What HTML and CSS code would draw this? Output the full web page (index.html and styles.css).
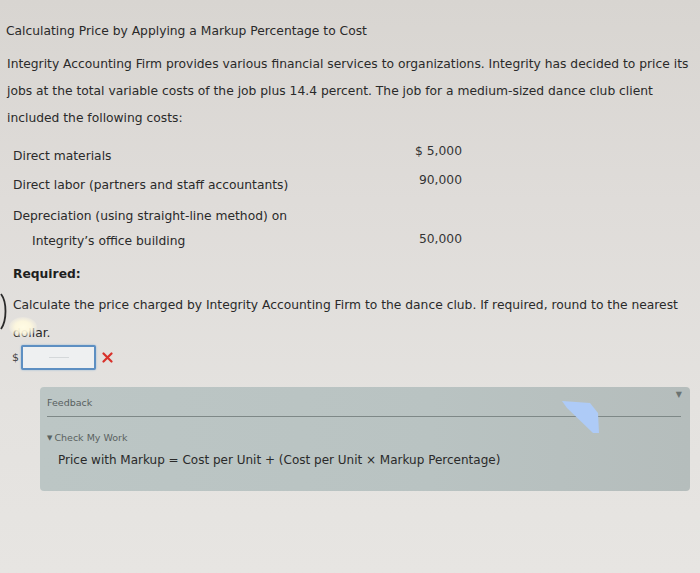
FILE: index.html
```html
<!DOCTYPE html>
<html lang="en">
<head>
<meta charset="utf-8">
<title>Calculating Price by Applying a Markup Percentage to Cost</title>
<link rel="stylesheet" href="styles.css">
</head>
<body>
<div class="page">
  <h1 class="title">Calculating Price by Applying a Markup Percentage to Cost</h1>
  <p class="intro">Integrity Accounting Firm provides various financial services to organizations. Integrity has decided to price its jobs at the total variable costs of the job plus 14.4 percent. The job for a medium-sized dance club client included the following costs:</p>

  <div class="costs">
    <div class="label">Direct materials</div>
    <div class="amount">$ 5,000</div>
    <div class="label">Direct labor (partners and staff accountants)</div>
    <div class="amount">90,000</div>
    <div class="label hang">Depreciation (using straight-line method) on<br>Integrity’s office building</div>
    <div class="amount">50,000</div>
  </div>

  <div class="required">Required:</div>
  <p class="question">Calculate the price charged by Integrity Accounting Firm to the dance club. If required, round to the nearest dollar.</p>

  <div class="answer">
    <span class="dollar">$</span>
    <span class="input"><span class="dash"></span></span>
    <svg class="wrong" width="11" height="11" viewBox="0 0 11 11"><path d="M1.5 1.5 L9.5 9.5 M9.5 1.5 L1.5 9.5" stroke="#d8312a" stroke-width="2.2" stroke-linecap="round"/></svg>
  </div>

  <div class="feedback">
    <div class="fb-head">
      <span class="fb-title">Feedback</span>
      <span class="fb-toggle">▼</span>
    </div>
    <div class="fb-check"><span class="tri">▼</span>Check My Work</div>
    <div class="fb-formula">Price with Markup = Cost per Unit + (Cost per Unit × Markup Percentage)</div>
  </div>

  <svg class="arc" width="10" height="40" viewBox="0 0 10 40"><path d="M1 2 C7 10 7 28 1 37" fill="none" stroke="#2a2a2a" stroke-width="1.8"/></svg>
  <div class="glow"></div>
  <svg class="glare" width="50" height="45" viewBox="0 0 50 45"><polygon points="2,1 30,3 38,13 39,33 33,33 7,8" fill="#aecbf7"/></svg>
</div>
</body>
</html>
```
FILE: styles.css
```css
html, body {
  margin: 0;
  padding: 0;
}
body {
  width: 700px;
  height: 573px;
  overflow: hidden;
  background: linear-gradient(180deg, #d8d5d1 0%, #dfdcd9 35%, #e4e2df 70%, #e7e5e2 100%);
  font-family: "DejaVu Sans", Verdana, sans-serif;
  font-size: 12.3px;
  color: #2a2a2a;
}
.page {
  position: relative;
  display: flow-root;
  height: 573px;
  padding: 0 6px 0 6px;
}
.title {
  margin: 21px 0 0;
  font-size: 12.3px;
  font-weight: normal;
  line-height: 20px;
  color: #2a2a2a;
}
.intro {
  margin: 10px 0 0 1px;
  line-height: 27px;
  width: 690px;
}
.costs {
  display: grid;
  grid-template-columns: 380px 69px;
  row-gap: 9px;
  margin: 14px 0 0 7px;
}
.label {
  line-height: 20px;
}
.label.hang {
  line-height: 25px;
  padding-left: 19px;
  text-indent: -19px;
}
.amount {
  text-align: right;
  line-height: 20px;
  align-self: end;
  margin-top: -10px;
  margin-bottom: 5px;
  color: #333;
}
.required {
  margin: 10px 0 0 7px;
  font-weight: bold;
  line-height: 20px;
  color: #1e1e1e;
}
.question {
  margin: 7px 0 0 7px;
  line-height: 28px;
  width: 680px;
}
.answer {
  display: flex;
  align-items: center;
  margin: -2px 0 0 6px;
  height: 25px;
}
.dollar {
  width: 9px;
  font-size: 11px;
  color: #444;
}
.input {
  width: 71px;
  height: 21px;
  border: 2px solid #5d8fc2;
  border-radius: 2px;
  background: #eef0f1;
  display: flex;
  align-items: center;
  justify-content: center;
  box-shadow: 0 0 2px #8fb2d6;
}
.dash {
  width: 20px;
  height: 1px;
  background: #d4d8da;
}
.wrong {
  margin-left: 6px;
}
.feedback {
  margin: 17px 0 0 34px;
  width: 636px;
  height: 90px;
  padding: 7px 7px 7px 7px;
  border-radius: 4px;
  background: linear-gradient(90deg, #bcc6c5 0%, #b9c3c2 60%, #b5bdbc 100%);
}
.fb-head {
  display: flex;
  justify-content: space-between;
  align-items: flex-start;
  height: 22px;
  border-bottom: 1.5px solid #7e8887;
  margin-right: 2px;
}
.fb-title {
  font-size: 9.5px;
  color: #58605f;
  line-height: 17px;
}
.fb-toggle {
  font-size: 8px;
  color: #6b7372;
  margin-top: -4px;
  margin-right: -1px;
}
.fb-check {
  margin-top: 14px;
  font-size: 9.5px;
  color: #5a6261;
  line-height: 14px;
}
.tri {
  font-size: 7px;
  margin-right: 2px;
  vertical-align: 1px;
}
.fb-formula {
  margin: 6px 0 0 11px;
  font-size: 12px;
  line-height: 18px;
  color: #2a2a2a;
}
.arc {
  position: absolute;
  left: 0;
  top: 292px;
}
.glow {
  position: absolute;
  left: 9px;
  top: 317px;
  width: 28px;
  height: 20px;
  border-radius: 50%;
  background: radial-gradient(ellipse at center, rgba(255,251,228,1) 0%, rgba(255,249,222,0.9) 40%, rgba(250,245,225,0.4) 65%, rgba(250,245,225,0) 80%);
}
.glare {
  position: absolute;
  left: 560px;
  top: 400px;
}
```
